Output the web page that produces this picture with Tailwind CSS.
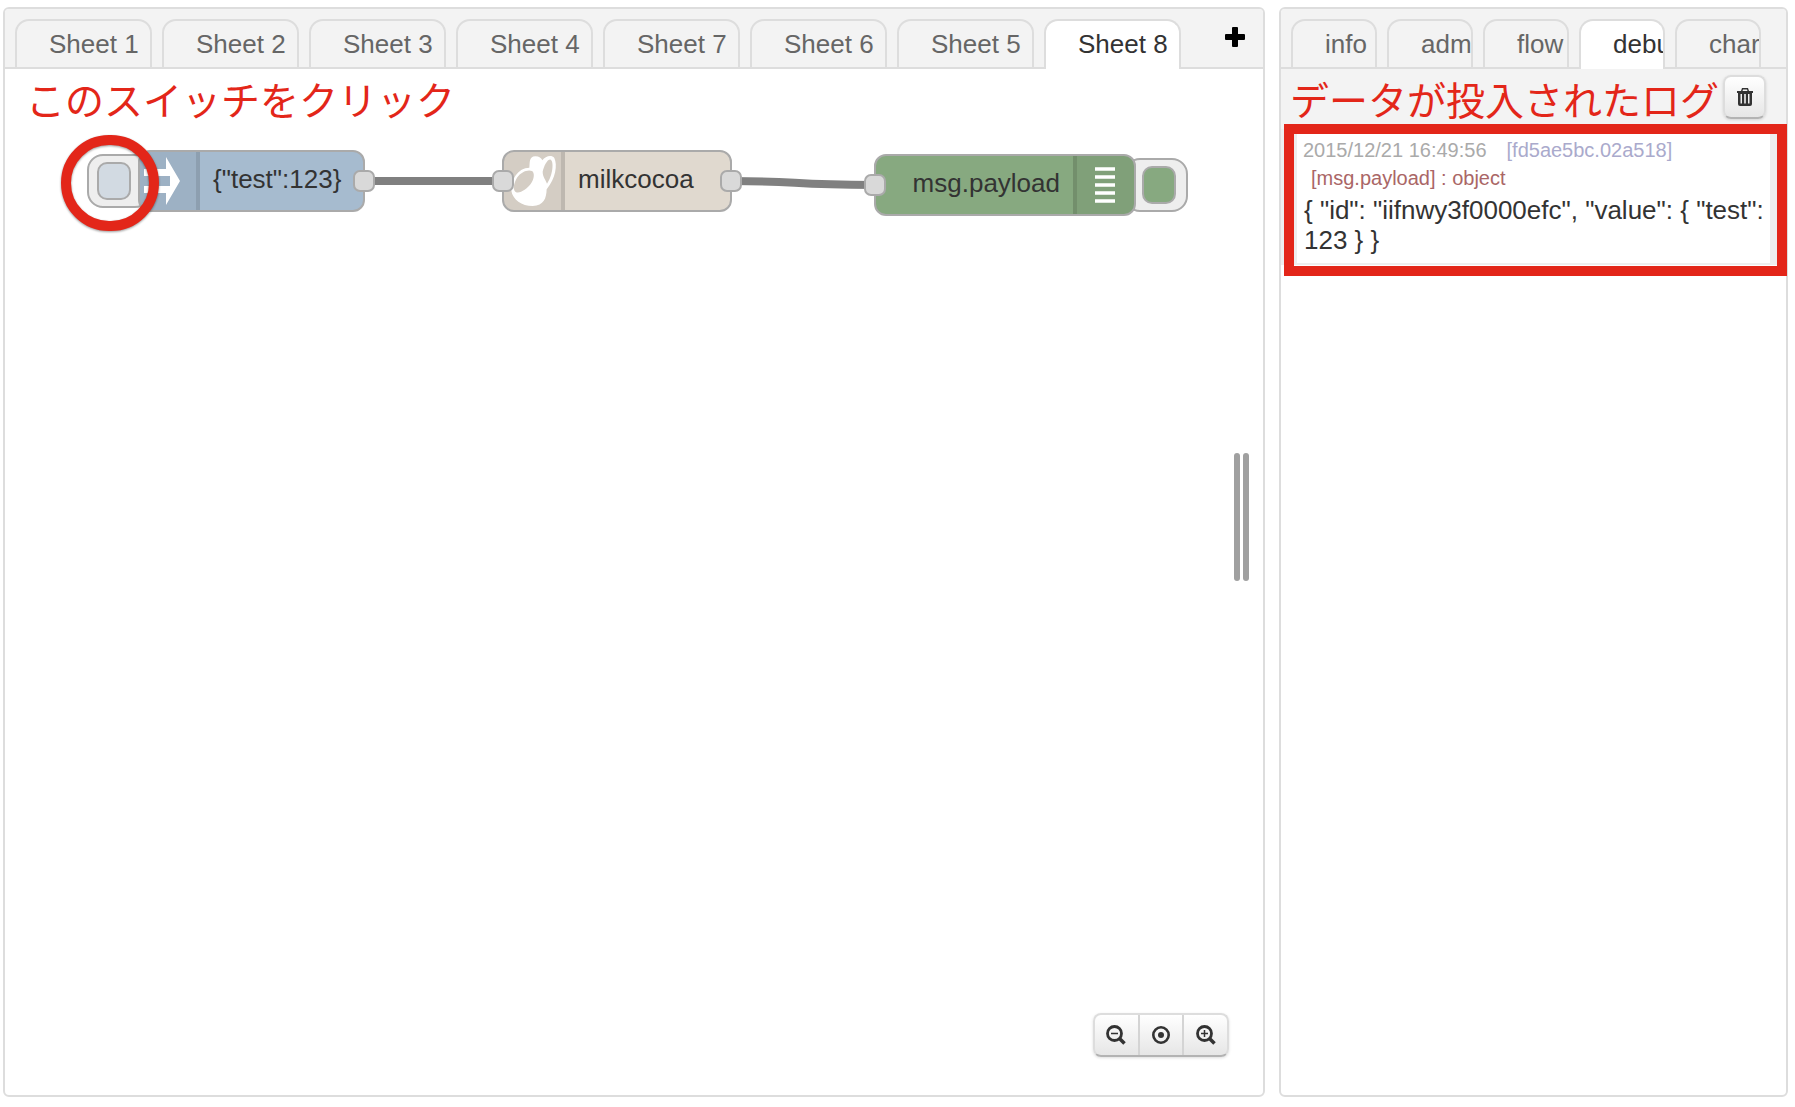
<!DOCTYPE html>
<html lang="ja">
<head>
    <meta charset="UTF-8">
    <meta name="viewport" content="width=device-width, initial-scale=1.0">
    <title>Node-RED</title>
    <script src="https://cdn.jsdelivr.net/npm/@tailwindcss/browser@4"></script>
</head>
<body class="flex h-screen gap-[14px] bg-white pt-[7px] pr-[7px] pb-[10px] pl-[3px] font-['Liberation_Sans','Noto_Sans_CJK_JP',sans-serif] text-[26px] leading-[30px] text-[#333]">

    <!-- Workspace -->
    <main class="flex min-w-0 flex-1 flex-col rounded-md border-2 border-[#ddd]">
        <nav class="flex h-[60px] shrink-0 rounded-t-sm bg-[#f3f3f3] pl-[10px] shadow-[inset_0_-2px_0_#ddd]">
            <div class="flex flex-1 gap-[10px] pt-[10px] text-[#666]">
                <a href="#" class="flex-1 rounded-t-[14px] border-2 border-[#ddd] pt-2 pl-8 whitespace-nowrap">Sheet 1</a>
                <a href="#" class="flex-1 rounded-t-[14px] border-2 border-[#ddd] pt-2 pl-8 whitespace-nowrap">Sheet 2</a>
                <a href="#" class="flex-1 rounded-t-[14px] border-2 border-[#ddd] pt-2 pl-8 whitespace-nowrap">Sheet 3</a>
                <a href="#" class="flex-1 rounded-t-[14px] border-2 border-[#ddd] pt-2 pl-8 whitespace-nowrap">Sheet 4</a>
                <a href="#" class="flex-1 rounded-t-[14px] border-2 border-[#ddd] pt-2 pl-8 whitespace-nowrap">Sheet 7</a>
                <a href="#" class="flex-1 rounded-t-[14px] border-2 border-[#ddd] pt-2 pl-8 whitespace-nowrap">Sheet 6</a>
                <a href="#" class="flex-1 rounded-t-[14px] border-2 border-[#ddd] pt-2 pl-8 whitespace-nowrap">Sheet 5</a>
                <a href="#" class="flex-1 rounded-t-[14px] border-2 border-b-0 border-[#ddd] bg-white pt-2 pl-8 whitespace-nowrap text-[#333]">Sheet 8</a>
            </div>
            <button type="button" aria-label="Add sheet" class="flex h-14 w-[82px] items-center justify-center pl-[26px]">
                <svg class="size-5" viewBox="0 0 20 20" fill="#000"><path d="M8 0h4a1 1 0 0 1 1 1v6h6a1 1 0 0 1 1 1v4a1 1 0 0 1-1 1h-6v6a1 1 0 0 1-1 1H8a1 1 0 0 1-1-1v-6H1a1 1 0 0 1-1-1V8a1 1 0 0 1 1-1h6V1a1 1 0 0 1 1-1z"/></svg>
            </button>
        </nav>

        <div class="relative flex-1 overflow-hidden">
            <p class="absolute top-[9px] left-[21px] text-[39px] leading-[48px] whitespace-nowrap text-[#e32619]">このスイッチをクリック</p>

            <!-- Wires -->
            <svg class="absolute top-0 left-0 h-40 w-[1200px]" viewBox="0 0 1200 160" fill="none" stroke="#808080" stroke-width="8">
                <path d="M360 112H498"/>
                <path d="M727 112C800 112 780 116 869 116"/>
            </svg>

            <!-- Inject node -->
            <button type="button" aria-label="Inject" class="absolute top-[85px] left-[82px] flex h-[54px] w-16 items-center rounded-[16px] border-2 border-[#aaa] bg-[#eee] pl-2">
                <span class="h-[38px] w-[34px] rounded-[10px] border-2 border-[#aaa] bg-[#d2dae2]"></span>
            </button>
            <div class="absolute top-[81px] left-[133px] flex h-[62px] w-[227px] overflow-hidden rounded-[12px] border-2 border-[#aaa] bg-[#a6bbcf]">
                <span class="flex w-[60px] items-center border-r-4 border-black/10 bg-black/5">
                    <svg class="ml-1 h-12 w-9" viewBox="0 0 36 48" fill="#fff"><path d="M0 12h22V0l14 24-14 24V36H0v-7h26V19H0z"/></svg>
                </span>
                <span class="pt-3 pl-[13px]">{"test":123}</span>
            </div>
            <span class="absolute top-[101px] left-[348px] size-[22px] rounded-[7px] border-2 border-[#aaa] bg-[#d9d9d9]"></span>
            <span class="absolute top-[66px] left-[56px] h-24 w-[98px] rounded-full border-[10px] border-[#e32619] drop-shadow-[0_1px_1px_#0006]"></span>

            <!-- Milkcocoa node -->
            <div class="absolute top-[81px] left-[497px] flex h-[62px] w-[230px] overflow-hidden rounded-[12px] border-2 border-[#aaa] bg-[#e0d9cf]">
                <span class="w-[61px] shrink-0 border-r-4 border-black/10 bg-black/5">
                    <svg class="h-[58px] w-[57px]" viewBox="72 96 171 174" fill="#fff" fill-rule="evenodd"><path d="M94 212C92 180 114 143 148 143C150 130 146 109 166 109C178 109 184 114 187 121C196 108 215 103 223 114C233 135 227 175 200 208C199 235 192 257 158 258C125 258 98 238 94 212ZM104 213C114 226 140 208 152 192C164 176 164 158 156 153C144 147 122 156 112 172C102 188 99 205 104 213ZM212 119C222 124 219 165 201 191C198 180 188 172 188 155C192 138 202 117 212 119Z"/></svg>
                </span>
                <span class="pt-3 pl-[13px]">milkcocoa</span>
            </div>
            <span class="absolute top-[101px] left-[487px] size-[22px] rounded-[7px] border-2 border-[#aaa] bg-[#d9d9d9]"></span>
            <span class="absolute top-[101px] left-[715px] size-[22px] rounded-[7px] border-2 border-[#aaa] bg-[#d9d9d9]"></span>

            <!-- Debug node -->
            <button type="button" aria-label="Toggle debug" class="absolute top-[89px] left-[1119px] flex h-[54px] w-16 items-center justify-end rounded-[16px] border-2 border-[#aaa] bg-[#eee] pr-[10px]">
                <span class="h-[38px] w-[34px] rounded-[10px] border-2 border-[#aaa] bg-[#87a980]"></span>
            </button>
            <div class="absolute top-[85px] left-[869px] flex h-[62px] w-[262px] justify-end overflow-hidden rounded-[12px] border-2 border-[#aaa] bg-[#87a980]">
                <span class="pt-3 pr-[13px]">msg.payload</span>
                <span class="flex w-[61px] items-center border-l-4 border-black/10 bg-black/5">
                    <svg class="ml-[18px] h-9 w-5" viewBox="0 0 20 36" stroke="#fff" stroke-width="3.500"><path d="M0 2h20M0 10h20M0 18h20M0 26h20M0 34h20"/></svg>
                </span>
            </div>
            <span class="absolute top-[105px] left-[859px] size-[22px] rounded-[7px] border-2 border-[#aaa] bg-[#d9d9d9]"></span>

            <!-- Splitter grip -->
            <div class="absolute top-[384px] right-[14px] flex h-32 gap-[3px]">
                <span class="w-[6px] rounded-full bg-[#a0a0a0]"></span>
                <span class="w-[6px] rounded-full bg-[#a0a0a0]"></span>
            </div>

            <!-- Zoom controls -->
            <div class="absolute right-[34px] bottom-[38px] flex h-11 w-[136px] divide-x-2 divide-[#d4d4d4] rounded-lg border-2 border-[#ddd] border-b-[#b3b3b3] bg-linear-to-b from-white to-[#e6e6e6] shadow-[0_1px_3px_#0002]">
                <button type="button" aria-label="Zoom out" class="flex flex-1 items-center justify-center">
                    <svg class="size-5" viewBox="0 0 20 20" fill="none" stroke="#333"><circle cx="8.500" cy="8.500" r="7" stroke-width="2.800"/><path d="M13.500 13.500l5 5" stroke-width="3.500"/><path d="M5 8.500h7" stroke-width="1.500"/></svg>
                </button>
                <button type="button" aria-label="Reset zoom" class="flex flex-1 items-center justify-center">
                    <svg class="size-5" viewBox="0 0 20 20" fill="none" stroke="#333"><circle cx="10" cy="10" r="7.700" stroke-width="2.600"/><circle cx="10" cy="10" r="3" fill="#333" stroke="none"/></svg>
                </button>
                <button type="button" aria-label="Zoom in" class="flex flex-1 items-center justify-center">
                    <svg class="size-5" viewBox="0 0 20 20" fill="none" stroke="#333"><circle cx="8.500" cy="8.500" r="7" stroke-width="2.800"/><path d="M13.500 13.500l5 5" stroke-width="3.500"/><path d="M5 8.500h7M8.500 5v7" stroke-width="1.500"/></svg>
                </button>
            </div>
        </div>
    </main>

    <!-- Sidebar -->
    <aside class="flex w-[509px] shrink-0 flex-col rounded-md border-2 border-[#ddd]">
        <nav class="flex h-[60px] shrink-0 gap-[10px] rounded-t-sm bg-[#f3f3f3] pt-[10px] pr-[25px] pl-[10px] text-[#666] shadow-[inset_0_-2px_0_#ddd]">
            <a href="#" class="w-0 flex-1 overflow-hidden rounded-t-[14px] border-2 border-[#ddd] pt-2 pl-8 whitespace-nowrap">info</a>
            <a href="#" class="w-0 flex-1 overflow-hidden rounded-t-[14px] border-2 border-[#ddd] pt-2 pl-8 whitespace-nowrap">admin</a>
            <a href="#" class="w-0 flex-1 overflow-hidden rounded-t-[14px] border-2 border-[#ddd] pt-2 pl-8 whitespace-nowrap">flow</a>
            <a href="#" class="w-0 flex-1 overflow-hidden rounded-t-[14px] border-2 border-b-0 border-[#ddd] bg-white pt-2 pl-8 whitespace-nowrap text-[#333]">debug</a>
            <a href="#" class="w-0 flex-1 overflow-hidden rounded-t-[14px] border-2 border-[#ddd] pt-2 pl-8 whitespace-nowrap">chart</a>
        </nav>
        <div class="flex h-[60px] shrink-0 items-start justify-between bg-[#f3f3f3] pt-[6px] pr-5 pl-[9px]">
            <p class="pt-[3px] text-[39px] leading-[48px] whitespace-nowrap text-[#e32619]">データが投入されたログ</p>
            <button type="button" aria-label="Clear log" class="flex h-11 w-[43px] shrink-0 items-center justify-center rounded-lg border-2 border-[#ddd] border-b-[#b3b3b3] bg-linear-to-b from-white to-[#e6e6e6] shadow-[0_1px_3px_#0002]">
                <svg class="h-[18px] w-4" viewBox="0 0 16 18" fill="#333" fill-rule="evenodd"><path d="M5 0h6l1 3h4v2h-1v11a2 2 0 0 1-2 2H3a2 2 0 0 1-2-2V5H0V3h4zM6 1.500L5.500 3h5L10 1.500zM3.500 6v9.500h1.500V6zM7.200 6v9.500h1.600V6zM11 6v9.500h1.500V6z"/></svg>
            </button>
        </div>
        <div class="relative">
            <div class="h-[136px] border-x-[16px] border-b-2 border-[#eee] pt-2 pl-[6px]">
                <div class="flex gap-5 text-xl leading-[26px]">
                    <span class="text-[#aaa]">2015/12/21 16:49:56</span>
                    <span class="text-[#aac]">[fd5ae5bc.02a518]</span>
                </div>
                <div class="pl-2 text-xl leading-[30px] text-[#a66]">[msg.payload] : object</div>
                <div class="pt-[2px] pl-px">{ "id": "iifnwy3f0000efc", "value": { "test": 123 } }</div>
            </div>
            <span class="absolute -top-[5px] -right-px -bottom-[11px] left-[3px] border-[10px] border-[#e32619]"></span>
        </div>
    </aside>

</body>
</html>
